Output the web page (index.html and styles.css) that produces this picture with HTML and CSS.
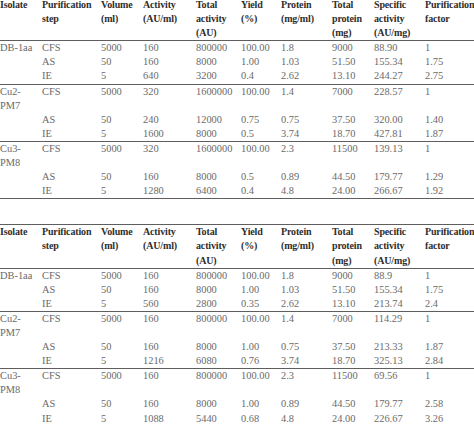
FILE: index.html
```html
<!DOCTYPE html>
<html>
<head>
<meta charset="utf-8">
<link rel="stylesheet" href="styles.css">
</head>
<body>
<table class="data first">
<colgroup>
<col class="c1"><col class="c2"><col class="c3"><col class="c4"><col class="c5"><col class="c6"><col class="c7"><col class="c8"><col class="c9"><col class="c10">
</colgroup>
<thead>
<tr><th>Isolate</th><th>Purification step</th><th>Volume (ml)</th><th>Activity (AU/ml)</th><th>Total activity (AU)</th><th>Yield (%)</th><th>Protein (mg/ml)</th><th>Total protein (mg)</th><th>Specific activity (AU/mg)</th><th>Purification factor</th></tr>
</thead>
<tbody>
<tr><td>DB-1aa</td><td>CFS</td><td>5000</td><td>160</td><td>800000</td><td>100.00</td><td>1.8</td><td>9000</td><td>88.90</td><td>1</td></tr>
<tr><td></td><td>AS</td><td>50</td><td>160</td><td>8000</td><td>1.00</td><td>1.03</td><td>51.50</td><td>155.34</td><td>1.75</td></tr>
<tr class="end"><td></td><td>IE</td><td>5</td><td>640</td><td>3200</td><td>0.4</td><td>2.62</td><td>13.10</td><td>244.27</td><td>2.75</td></tr>
<tr><td>Cu2-<br>PM7</td><td>CFS</td><td>5000</td><td>320</td><td>1600000</td><td>100.00</td><td>1.4</td><td>7000</td><td>228.57</td><td>1</td></tr>
<tr><td></td><td>AS</td><td>50</td><td>240</td><td>12000</td><td>0.75</td><td>0.75</td><td>37.50</td><td>320.00</td><td>1.40</td></tr>
<tr class="end"><td></td><td>IE</td><td>5</td><td>1600</td><td>8000</td><td>0.5</td><td>3.74</td><td>18.70</td><td>427.81</td><td>1.87</td></tr>
<tr><td>Cu3-<br>PM8</td><td>CFS</td><td>5000</td><td>320</td><td>1600000</td><td>100.00</td><td>2.3</td><td>11500</td><td>139.13</td><td>1</td></tr>
<tr><td></td><td>AS</td><td>50</td><td>160</td><td>8000</td><td>0.5</td><td>0.89</td><td>44.50</td><td>179.77</td><td>1.29</td></tr>
<tr class="end"><td></td><td>IE</td><td>5</td><td>1280</td><td>6400</td><td>0.4</td><td>4.8</td><td>24.00</td><td>266.67</td><td>1.92</td></tr>
</tbody>
</table>

<table class="data second">
<colgroup>
<col class="c1"><col class="c2"><col class="c3"><col class="c4"><col class="c5"><col class="c6"><col class="c7"><col class="c8"><col class="c9"><col class="c10">
</colgroup>
<thead>
<tr><th>Isolate</th><th>Purification step</th><th>Volume (ml)</th><th>Activity (AU/ml)</th><th>Total activity (AU)</th><th>Yield (%)</th><th>Protein (mg/ml)</th><th>Total protein (mg)</th><th>Specific activity (AU/mg)</th><th>Purification factor</th></tr>
</thead>
<tbody>
<tr><td>DB-1aa</td><td>CFS</td><td>5000</td><td>160</td><td>800000</td><td>100.00</td><td>1.8</td><td>9000</td><td>88.9</td><td>1</td></tr>
<tr><td></td><td>AS</td><td>50</td><td>160</td><td>8000</td><td>1.00</td><td>1.03</td><td>51.50</td><td>155.34</td><td>1.75</td></tr>
<tr class="end"><td></td><td>IE</td><td>5</td><td>560</td><td>2800</td><td>0.35</td><td>2.62</td><td>13.10</td><td>213.74</td><td>2.4</td></tr>
<tr><td>Cu2-<br>PM7</td><td>CFS</td><td>5000</td><td>160</td><td>800000</td><td>100.00</td><td>1.4</td><td>7000</td><td>114.29</td><td>1</td></tr>
<tr><td></td><td>AS</td><td>50</td><td>160</td><td>8000</td><td>1.00</td><td>0.75</td><td>37.50</td><td>213.33</td><td>1.87</td></tr>
<tr class="end"><td></td><td>IE</td><td>5</td><td>1216</td><td>6080</td><td>0.76</td><td>3.74</td><td>18.70</td><td>325.13</td><td>2.84</td></tr>
<tr><td>Cu3-<br>PM8</td><td>CFS</td><td>5000</td><td>160</td><td>800000</td><td>100.00</td><td>2.3</td><td>11500</td><td>69.56</td><td>1</td></tr>
<tr><td></td><td>AS</td><td>50</td><td>160</td><td>8000</td><td>1.00</td><td>0.89</td><td>44.50</td><td>179.77</td><td>2.58</td></tr>
<tr><td></td><td>IE</td><td>5</td><td>1088</td><td>5440</td><td>0.68</td><td>4.8</td><td>24.00</td><td>226.67</td><td>3.26</td></tr>
</tbody>
</table>
</body>
</html>
```
FILE: styles.css
```css
html, body {
  margin: 0;
  padding: 0;
  background: #ffffff;
  overflow: hidden;
}
body {
  width: 474px;
  height: 426px;
  font-family: "Liberation Serif", "Times New Roman", serif;
}
.data {
  width: 474px;
  table-layout: fixed;
  border-collapse: collapse;
  font-size: 10.4px;
  line-height: 14.1px;
}
.first {
  margin-top: -2px;
}
.second {
  margin-top: 25px;
  border-top: 1.5px solid #5e5e5e;
}
.c1 { width: 42px; }
.c2 { width: 59px; }
.c3 { width: 42px; }
.c4 { width: 53px; }
.c5 { width: 45px; }
.c6 { width: 40px; }
.c7 { width: 51px; }
.c8 { width: 42px; }
.c9 { width: 51px; }
.c10 { width: 49px; }
.data th, .data td {
  padding: 0;
  text-align: left;
  vertical-align: top;
  overflow: visible;
}
.data th {
  font-weight: bold;
  font-size: 10px;
  letter-spacing: -0.15px;
  color: #2e2e2e;
}
.data td {
  color: #6a6a6a;
  white-space: nowrap;
}
.data thead tr {
  border-bottom: 1.5px solid #5e5e5e;
}
.data tr.end {
  border-bottom: 1.5px solid #5e5e5e;
}
```
